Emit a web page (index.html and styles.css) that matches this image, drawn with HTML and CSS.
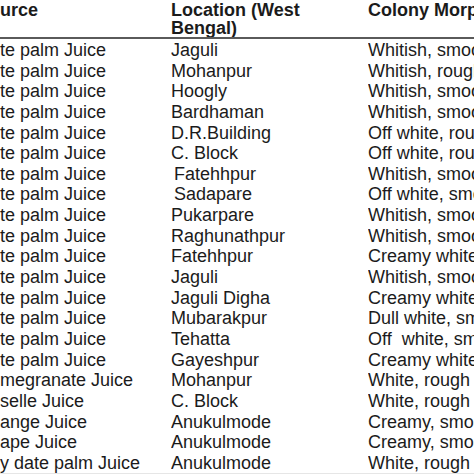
FILE: index.html
```html
<!DOCTYPE html>
<html>
<head>
<meta charset="utf-8">
<link rel="stylesheet" href="styles.css">
</head>
<body>
<div class="table">
  <div class="head">
    <div class="c1">urce</div>
    <div class="c2">Location (West<br>Bengal)</div>
    <div class="c3">Colony Morphology</div>
  </div>
  <div class="body">
    <div class="row"><div class="c1">te palm Juice</div><div class="c2">Jaguli</div><div class="c3">Whitish, smooth</div></div>
    <div class="row"><div class="c1">te palm Juice</div><div class="c2">Mohanpur</div><div class="c3">Whitish, rough</div></div>
    <div class="row"><div class="c1">te palm Juice</div><div class="c2">Hoogly</div><div class="c3">Whitish, smooth</div></div>
    <div class="row"><div class="c1">te palm Juice</div><div class="c2">Bardhaman</div><div class="c3">Whitish, smooth</div></div>
    <div class="row"><div class="c1">te palm Juice</div><div class="c2">D.R.Building</div><div class="c3">Off white, rough</div></div>
    <div class="row"><div class="c1">te palm Juice</div><div class="c2">C. Block</div><div class="c3">Off white, rough</div></div>
    <div class="row"><div class="c1">te palm Juice</div><div class="c2 ind">Fatehhpur</div><div class="c3">Whitish, smooth</div></div>
    <div class="row"><div class="c1">te palm Juice</div><div class="c2 ind">Sadapare</div><div class="c3">Off white, smooth</div></div>
    <div class="row"><div class="c1">te palm Juice</div><div class="c2">Pukarpare</div><div class="c3">Whitish, smooth</div></div>
    <div class="row"><div class="c1">te palm Juice</div><div class="c2">Raghunathpur</div><div class="c3">Whitish, smooth</div></div>
    <div class="row"><div class="c1">te palm Juice</div><div class="c2">Fatehhpur</div><div class="c3">Creamy white</div></div>
    <div class="row"><div class="c1">te palm Juice</div><div class="c2">Jaguli</div><div class="c3">Whitish, smooth</div></div>
    <div class="row"><div class="c1">te palm Juice</div><div class="c2">Jaguli Digha</div><div class="c3">Creamy white</div></div>
    <div class="row"><div class="c1">te palm Juice</div><div class="c2">Mubarakpur</div><div class="c3">Dull white, smooth</div></div>
    <div class="row"><div class="c1">te palm Juice</div><div class="c2">Tehatta</div><div class="c3">Off&nbsp; white, smooth</div></div>
    <div class="row"><div class="c1">te palm Juice</div><div class="c2">Gayeshpur</div><div class="c3">Creamy white</div></div>
    <div class="row"><div class="c1">megranate Juice</div><div class="c2">Mohanpur</div><div class="c3">White, rough</div></div>
    <div class="row"><div class="c1">selle Juice</div><div class="c2">C. Block</div><div class="c3">White, rough</div></div>
    <div class="row"><div class="c1">ange Juice</div><div class="c2">Anukulmode</div><div class="c3">Creamy, smooth</div></div>
    <div class="row"><div class="c1">ape Juice</div><div class="c2">Anukulmode</div><div class="c3">Creamy, smooth</div></div>
    <div class="row"><div class="c1">y date palm Juice</div><div class="c2">Anukulmode</div><div class="c3">White, rough</div></div>
  </div>
</div>
</body>
</html>
```

FILE: styles.css
```css
html, body {
  margin: 0;
  padding: 0;
  background: #ffffff;
}
body {
  width: 474px;
  height: 474px;
  overflow: hidden;
  font-family: "Liberation Sans", Arial, sans-serif;
  color: #1b1b1b;
}
.table {
  width: 474px;
}
.head {
  display: grid;
  grid-template-columns: 171px 197px 1fr;
  font-weight: bold;
  font-size: 18px;
  line-height: 18px;
  padding-top: 1px;
  height: 36px;
  border-bottom: 2px solid #5a5a5a;
  white-space: nowrap;
}
.body {
  padding-top: 1px;
  border-bottom: 2px solid #e6e6e6;
}
.row {
  display: grid;
  grid-template-columns: 171px 197px 1fr;
  font-size: 18px;
  line-height: 20.65px;
  height: 20.65px;
  white-space: nowrap;
}
.c1, .c2, .c3 {
  overflow: hidden;
}
.ind {
  padding-left: 3px;
}
```
